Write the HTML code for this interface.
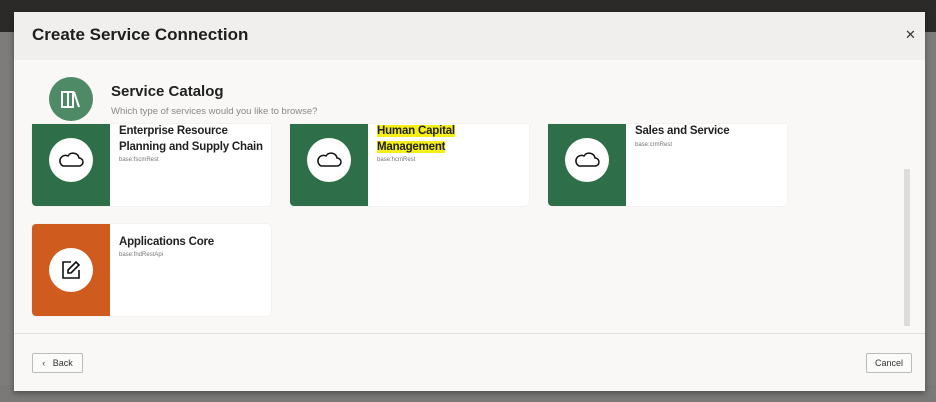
<!DOCTYPE html><html><head><style>
*{box-sizing:border-box;margin:0;padding:0}
body{width:936px;height:402px;overflow:hidden;background:#7d7c7b;font-family:"Liberation Sans",sans-serif;position:relative}
.top{position:absolute;left:0;top:0;width:936px;height:32px;background:#2b2a29}
.bot{position:absolute;left:0;top:385px;width:936px;height:17px;background:#7a7978}
.dlg{position:absolute;left:14px;top:12px;width:911px;height:379px;background:#f9f8f6;box-shadow:0 2px 6px rgba(0,0,0,.4)}
.hd{position:absolute;left:0;top:0;width:911px;height:48px;background:#f0efed}
.hd h1{position:absolute;left:18px;top:13px;font-size:17px;font-weight:bold;color:#1e1e1e}
.x{position:absolute;left:891px;top:15px;font-size:13px;color:#333}
.av{position:absolute;left:35px;top:65px;width:44px;height:44px;border-radius:50%;background:#4f8a66}
.sc{position:absolute;left:97px;top:71px;font-size:15px;font-weight:bold;color:#222}
.sub{position:absolute;left:97px;top:94px;font-size:9.5px;color:#888}
.card{position:absolute;width:239px;background:#fff;border-radius:4px;overflow:hidden;box-shadow:0 0 1px rgba(0,0,0,.15)}
.img{position:absolute;left:0;top:0;width:78px;height:100%;background:#2e6f49}
.circ{position:absolute;left:17px;width:44px;height:44px;border-radius:50%;background:#fff}
.t{position:absolute;left:87px;font-size:11.5px;font-weight:bold;color:#222;line-height:16px;white-space:nowrap;letter-spacing:-0.2px}
.s{position:absolute;left:87px;font-size:6px;color:#777}
.hl{background:#f5ee17}
.btn{position:absolute;top:341px;height:20px;border:1px solid #bbb;border-radius:2px;background:#fbfbfa;font-size:9px;color:#333;line-height:18px;text-align:center}
</style></head><body>
<div class="top"></div><div class="bot"></div>
<div class="dlg">
<div class="hd"><h1>Create Service Connection</h1><div class="x">✕</div></div>
<div class="av"><svg width="44" height="44"><g fill="none" stroke="#fff" stroke-width="2"><rect x="13" y="15" width="6" height="15"/><rect x="19" y="15" width="5" height="15"/><path d="M25 15l5 15"/></g></svg></div>
<div class="sc">Service Catalog</div>
<div class="sub">Which type of services would you like to browse?</div>
<div class="card" style="left:18px;top:112px;height:82px;border-radius:0 0 4px 4px"><div class="img"></div><div class="circ" style="top:14px"><svg width="44" height="44"><path d="M14 28h16a4 4 0 0 0 0-8 6 6 0 0 0-11-2 5 5 0 0 0-5 10z" fill="none" stroke="#111" stroke-width="1.5"/></svg></div><div class="t" style="top:-1px">Enterprise Resource<br>Planning and Supply Chain</div><div class="s" style="top:33px">base:fscmRest</div></div>
<div class="card" style="left:276px;top:112px;height:82px;border-radius:0 0 4px 4px"><div class="img"></div><div class="circ" style="top:14px"><svg width="44" height="44"><path d="M14 28h16a4 4 0 0 0 0-8 6 6 0 0 0-11-2 5 5 0 0 0-5 10z" fill="none" stroke="#111" stroke-width="1.5"/></svg></div><div class="t" style="top:-1px"><span class="hl">Human Capital</span><br><span class="hl">Management</span></div><div class="s" style="top:33px">base:hcmRest</div></div>
<div class="card" style="left:534px;top:112px;height:82px;border-radius:0 0 4px 4px"><div class="img"></div><div class="circ" style="top:14px"><svg width="44" height="44"><path d="M14 28h16a4 4 0 0 0 0-8 6 6 0 0 0-11-2 5 5 0 0 0-5 10z" fill="none" stroke="#111" stroke-width="1.5"/></svg></div><div class="t" style="top:-1px">Sales and Service</div><div class="s" style="top:18px">base:crmRest</div></div>
<div class="card" style="left:18px;top:212px;height:92px"><div class="img" style="background:#cf5c1e"></div><div class="circ" style="top:24px"><svg width="44" height="44"><g fill="none" stroke="#111" stroke-width="1.6"><path d="M22 14h-8v16h16v-8"/><path d="M19 25v-3l8-8 3 3-8 8z"/></g></svg></div><div class="t" style="top:10px">Applications Core</div><div class="s" style="top:28px">base:fndRestApi</div></div>
<div style="position:absolute;left:890px;top:157px;width:6px;height:157px;background:#dedcda"></div>
<div style="position:absolute;left:0;top:321px;width:911px;height:1px;background:#e2e0dd"></div>
<div class="btn" style="left:18px;width:51px">‹&nbsp;&nbsp; Back</div>
<div class="btn" style="left:852px;width:46px">Cancel</div>
</div>
</body></html>
